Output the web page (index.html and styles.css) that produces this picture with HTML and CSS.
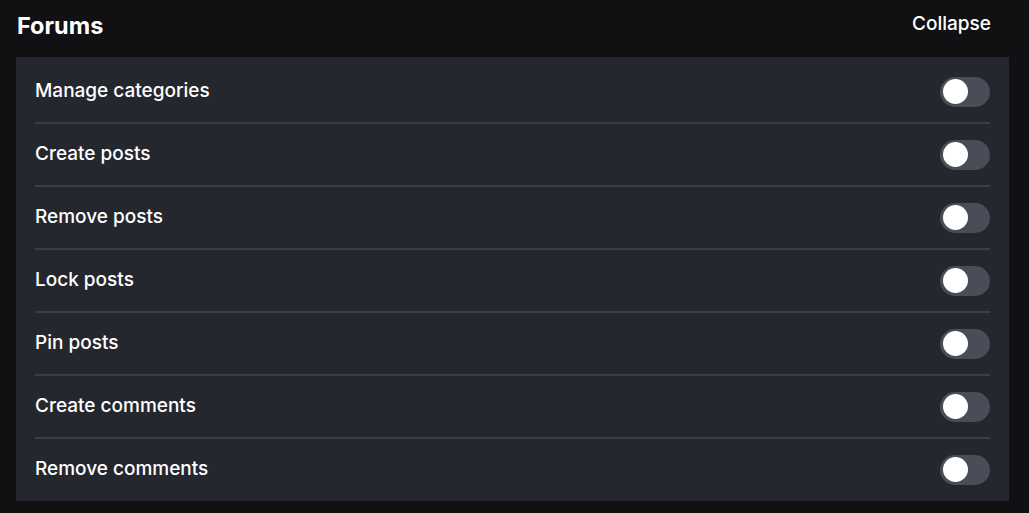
FILE: index.html
```html
<!DOCTYPE html>
<html>
<head>
<meta charset="utf-8">
<link rel="stylesheet" href="styles.css">
</head>
<body>
<div class="page">
  <header class="head">
    <h1 class="title">Forums</h1>
    <button class="collapse">Collapse</button>
  </header>
  <section class="panel">
    <div class="row"><span class="label">Manage categories</span><span class="toggle"><span class="knob"></span></span></div>
    <div class="row"><span class="label">Create posts</span><span class="toggle"><span class="knob"></span></span></div>
    <div class="row"><span class="label">Remove posts</span><span class="toggle"><span class="knob"></span></span></div>
    <div class="row"><span class="label">Lock posts</span><span class="toggle"><span class="knob"></span></span></div>
    <div class="row"><span class="label">Pin posts</span><span class="toggle"><span class="knob"></span></span></div>
    <div class="row"><span class="label">Create comments</span><span class="toggle"><span class="knob"></span></span></div>
    <div class="row"><span class="label">Remove comments</span><span class="toggle"><span class="knob"></span></span></div>
  </section>
</div>
</body>
</html>
```
FILE: styles.css
```css
html, body {
  margin: 0;
  padding: 0;
  background: #111113;
  color: #ffffff;
  font-family: Inter, "Noto Sans", sans-serif;
}
.page {
  padding: 0 20px 0 16px;
}
.head {
  height: 57px;
  display: flex;
  align-items: center;
  justify-content: space-between;
}
.title {
  margin: 0 0 7px 1px;
  font-size: 23.5px;
  font-weight: 700;
}
.collapse {
  background: none;
  border: none;
  color: #fff;
  font-family: inherit;
  font-size: 19px;
  font-weight: 500;
  padding: 0;
  margin: 0 18px 11px 0;
}
.panel {
  background: #25272f;
  padding: 4px 19px 1px;
}
.row {
  height: 61px;
  display: flex;
  align-items: center;
  justify-content: space-between;
}
.row + .row {
  border-top: 2px solid #3a3c46;
}
.label {
  font-size: 19px;
  font-weight: 500;
  margin-top: -2px;
}
.toggle {
  width: 50px;
  height: 30px;
  border-radius: 15px;
  background: #4a4c58;
  display: flex;
  align-items: center;
  padding-left: 3px;
  box-sizing: border-box;
}
.knob {
  width: 25px;
  height: 25px;
  border-radius: 50%;
  background: #ffffff;
}
```
